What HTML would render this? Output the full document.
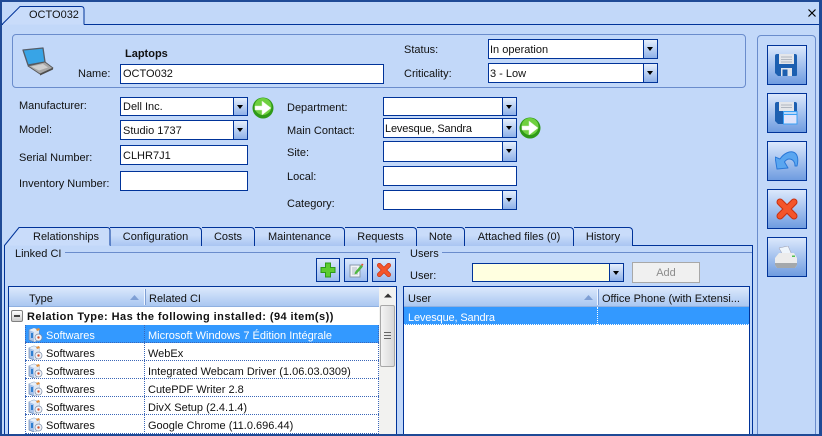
<!DOCTYPE html>
<html><head><meta charset="utf-8"><style>
html,body{margin:0;padding:0}
#r{position:relative;width:822px;height:436px;overflow:hidden;background:#c2d8f9;font:11px/14px "Liberation Sans",sans-serif;color:#111}
#r div,#r span,#r svg{position:absolute;box-sizing:border-box}
.t{white-space:nowrap}
.i{background:#fff;border:1px solid #003399}
.c{background:#fff;border:1px solid #003399}
.c>div{right:0;top:0;bottom:0;width:14px;border-left:1px solid #003399;background:linear-gradient(#e6effc,#8fb1e8)}
.c>div:after{content:"";position:absolute;left:3px;top:7px;border:3px solid transparent;border-top:4px solid #000;border-bottom:0}
.b{border:1px solid #003399;background:linear-gradient(#dbe8fc,#6f9ce0)}
.tab{top:227px;height:19px;border:1px solid #003399;border-bottom:0;border-left:0;border-radius:0 4px 0 0;background:linear-gradient(#c9dcfa,#c9dcfa 40%,#a9c5f2);text-align:center;line-height:19px}
.h{background:linear-gradient(#dce9fc,#aac7f1);height:20px;border-bottom:1px solid #8fb0e0}
.row{left:25px;width:354px;height:18px;background:#fff;border-bottom:1px dotted #3a66b8}
.row.s{background:#3399ff;color:#fff}
.row span{top:4px;white-space:nowrap}
.row svg{left:2px;top:1px}
</style></head><body><div id="r">
<svg width="0" height="0" style="left:0;top:0"><defs>
<symbol id="arrow" viewBox="0 0 22 22"><circle cx="11" cy="11" r="10.5" fill="#2f9a18"/><circle cx="11" cy="9.5" r="8.5" fill="#6fd040"/><path d="M3 9h7V4l9 7-9 7v-5H3z" fill="#fff" stroke="#d8f0c8" stroke-width=".5"/></symbol>
<symbol id="sw" viewBox="0 0 16 16"><path d="M2 4l5-2 5 2v10l-5 2-5-2z" fill="#a9c4ea" stroke="#6d87ad" stroke-width=".7"/><path d="M2 4l5 2 5-2-5-2z" fill="#e8f0fa"/><path d="M7 6v10l5-2V4z" fill="#dfe7f2"/><path d="M4 7h2v5H4z" fill="#2f7fd0"/><circle cx="11.500" cy="11.500" r="3.500" fill="#f2f4f8" stroke="#7a8ba8" stroke-width=".7"/><circle cx="11.500" cy="11.500" r="1.200" fill="#d05030"/><path d="M9 3l3-1 1 2-3 1z" fill="#e09040"/></symbol>
<symbol id="x" viewBox="0 0 24 24"><path d="M5 5L19 19M19 5L5 19" stroke="#c83010" stroke-width="7" stroke-linecap="round"/><path d="M5 5L19 19M19 5L5 19" stroke="#f4552a" stroke-width="5" stroke-linecap="round"/></symbol>
</defs></svg>

<!-- outer frame -->
<div style="left:0;top:0;width:822px;height:2px;background:#1f4a96"></div>
<div style="left:0;top:0;width:2px;height:436px;background:#1f4a96"></div>
<div style="right:0;top:0;width:3px;height:436px;background:#1f4a96"></div>
<div style="left:0;bottom:0;width:822px;height:2px;background:#1f4a96"></div>

<!-- document tab -->
<div style="left:2px;top:24px;width:817px;height:1px;background:#003399"></div>
<svg style="left:2px;top:5px" width="85" height="20" viewBox="0 0 85 20"><path d="M0 19.500L18 1.500H79q3 0 3 3v15" fill="#c9dcfa" stroke="#003399"/><path d="M1 20h81" stroke="#c2d8f9" stroke-width="1"/></svg>
<span class="t" style="left:29px;top:8px">OCTO032</span>
<svg style="left:807px;top:8px" width="10" height="10" viewBox="0 0 10 10"><path d="M1.500 1.500l7 7M8.500 1.500l-7 7" stroke="#000" stroke-width="1.200"/></svg>

<!-- header group -->
<div style="left:12px;top:34px;width:734px;height:54px;border:1px solid #6a8ccc;border-radius:4px"></div>
<svg style="left:22px;top:47px" width="32" height="29" viewBox="0 0 32 29"><path d="M1 3L21 1 23 15 6 18z" fill="#38a4e6" stroke="#555d68" stroke-width="1.300" stroke-linejoin="round"/><path d="M6 19L23 15 31 21 18 27z" fill="#a8a8a8" stroke="#555" stroke-width=".8" stroke-linejoin="round"/><path d="M9 19.500L21 17 26 20.500 17 23.500z" fill="#cfcfcf"/><path d="M18 27L31 21v1.500L18 28.500z" fill="#4c4c4c"/></svg>
<span class="t" style="left:125px;top:47px;font-weight:bold">Laptops</span>
<span class="t" style="left:78px;top:67px;">Name:</span>
<div class="i t" style="left:120px;top:64px;width:264px;height:20px;padding-left:2px;line-height:19px">OCTO032</div>
<span class="t" style="left:404px;top:43px">Status:</span>
<div class="c t" style="left:488px;top:39px;width:170px;height:20px;padding-left:1px;line-height:20px">In operation<div></div></div>
<span class="t" style="left:404px;top:67px">Criticality:</span>
<div class="c t" style="left:488px;top:63px;width:170px;height:20px;padding-left:1px;line-height:20px">3 - Low<div></div></div>

<!-- left fields -->
<span class="t" style="left:19px;top:99px">Manufacturer:</span>
<div class="c t" style="left:120px;top:97px;width:128px;height:19px;padding-left:2px;line-height:19px">Dell Inc.<div></div></div>
<svg style="left:252px;top:97px" width="22" height="22"><use href="#arrow"/></svg>
<span class="t" style="left:19px;top:123px">Model:</span>
<div class="c t" style="left:120px;top:120px;width:128px;height:20px;padding-left:2px;line-height:20px">Studio 1737<div></div></div>
<span class="t" style="left:19px;top:151px">Serial Number:</span>
<div class="i t" style="left:120px;top:145px;width:128px;height:20px;padding-left:2px;line-height:20px">CLHR7J1</div>
<span class="t" style="left:19px;top:177px">Inventory Number:</span>
<div class="i" style="left:120px;top:171px;width:128px;height:20px"></div>

<!-- middle fields -->
<span class="t" style="left:287px;top:101px">Department:</span>
<div class="c" style="left:383px;top:97px;width:134px;height:19px"><div></div></div>
<span class="t" style="left:287px;top:124px">Main Contact:</span>
<div class="c t" style="left:383px;top:118px;width:134px;height:20px;padding-left:1px;line-height:20px;letter-spacing:-.15px">Levesque, Sandra<div></div></div>
<svg style="left:519px;top:117px" width="22" height="22"><use href="#arrow"/></svg>
<span class="t" style="left:287px;top:146px">Site:</span>
<div class="c" style="left:383px;top:141px;width:134px;height:21px"><div></div></div>
<span class="t" style="left:287px;top:170px">Local:</span>
<div class="i" style="left:383px;top:166px;width:134px;height:20px"></div>
<span class="t" style="left:287px;top:197px">Category:</span>
<div class="c" style="left:383px;top:190px;width:134px;height:20px"><div></div></div>

<!-- side toolbar -->
<div style="left:757px;top:35px;width:59px;height:420px;border:1px solid #6a8ccc;border-radius:4px"></div>
<div class="b" style="left:767px;top:45px;width:40px;height:40px"></div>
<svg style="left:775px;top:53px" width="24" height="24" viewBox="0 0 24 24"><path d="M0 3q0-2 2-2h18q2 0 2 2v19q0 1-1 1H3l-3-3z" fill="#1c5fb0"/><path d="M4 1h15v10H4z" fill="#e4e6ea"/><path d="M6 4h11M6 6.500h11M6 9h11" stroke="#b0b6c0"/><path d="M6 15h11v8H6z" fill="#dfe4ec"/><path d="M7.500 16.500h5v6.500h-5z" fill="#1c5fb0"/></svg>
<div class="b" style="left:767px;top:93px;width:40px;height:40px"></div>
<svg style="left:775px;top:101px" width="24" height="24" viewBox="0 0 24 24"><path d="M0 3q0-2 2-2h18q2 0 2 2v19q0 1-1 1H3l-3-3z" fill="#1c5fb0"/><path d="M4 1h15v9H4z" fill="#e4e6ea"/><path d="M6 4h11M6 6.500h11" stroke="#b0b6c0"/><path d="M8.500 10.500h13.500v12.500H8.500z" fill="#dfe4fb" stroke="#3aa0f5"/><path d="M8.500 10.500h13.500v3H8.500z" fill="#b8d8fa" stroke="#3aa0f5"/></svg>
<div class="b" style="left:767px;top:141px;width:40px;height:40px"></div>
<svg style="left:775px;top:150px" width="24" height="22" viewBox="0 0 24 22"><path d="M0 7L5 9C9 3 15 1 18 2C22 3 24 8 22 16L20 16C20 12 18 9 14 9C12 9 10 11 9.500 12L13 18L2 19Z" fill="#5aa6f0" stroke="#2a78d8" stroke-linejoin="round"/></svg>
<div class="b" style="left:767px;top:189px;width:40px;height:40px"></div>
<svg style="left:775px;top:197px" width="24" height="24"><use href="#x"/></svg>
<div class="b" style="left:767px;top:237px;width:40px;height:40px"></div>
<svg style="left:775px;top:246px" width="24" height="23" viewBox="0 0 24 23"><path d="M4 2l9-2 4 9H8z" fill="#eef5fc" stroke="#99a" stroke-width=".5"/><path d="M0 12l4-5h15l3 5v7l-2 3H2l-2-3z" fill="#ececec"/><path d="M0 17h22v2l-2 3H2l-2-3z" fill="#a4a8ac"/><path d="M17 9.500h3v1.500h-3z" fill="#50c050"/></svg>

<!-- inner tabs -->
<div style="left:4px;top:245px;width:749px;height:190px;border:1px solid #003399;border-bottom:0"></div>
<div class="tab" style="left:110px;width:92px">Configuration</div>
<div class="tab" style="left:202px;width:53px">Costs</div>
<div class="tab" style="left:255px;width:90px">Maintenance</div>
<div class="tab" style="left:345px;width:72px">Requests</div>
<div class="tab" style="left:417px;width:48px">Note</div>
<div class="tab" style="left:465px;width:109px">Attached files (0)</div>
<div class="tab" style="left:574px;width:59px">History</div>
<svg style="left:4px;top:227px" width="108" height="20" viewBox="0 0 108 20"><path d="M.5 18.500L15 .5H103q3 0 3 3V19" fill="#c9dcfa" stroke="#003399"/><path d="M1 19h105" stroke="#c2d8f9" stroke-width="1"/></svg>
<span class="t" style="left:33px;top:230px">Relationships</span>

<!-- group legends -->
<span class="t" style="left:15px;top:247px">Linked CI</span>
<div style="left:65px;top:252px;width:335px;height:1px;background:#6a8ccc"></div>
<span class="t" style="left:410px;top:247px">Users</span>
<div style="left:442px;top:252px;width:310px;height:1px;background:#6a8ccc"></div>

<!-- small toolbar -->
<div class="b" style="left:316px;top:258px;width:24px;height:24px;background:linear-gradient(#dbe8fc,#9dbcee)"></div>
<svg style="left:320px;top:262px" width="16" height="16" viewBox="0 0 16 16"><path d="M5.500 1h5v4.500H15v5h-4.500V15h-5v-4.500H1v-5h4.500z" fill="#5ccc30" stroke="#2d9a18"/></svg>
<div class="b" style="left:344px;top:258px;width:24px;height:24px;background:linear-gradient(#dbe8fc,#9dbcee)"></div>
<svg style="left:348px;top:262px" width="16" height="16" viewBox="0 0 16 16"><path d="M2 3h10v12H2z" fill="#f2f4f6" stroke="#8a9aac"/><path d="M4 6h5M4 8h5M4 10h4M4 12h6" stroke="#b0b8c4"/><path d="M7 10l6-7 2 1.500-6 7-2.500 1z" fill="#50b840"/><path d="M13 3l1-1.500 1.500 1L14.500 4z" fill="#e05030"/></svg>
<div class="b" style="left:372px;top:258px;width:24px;height:24px;background:linear-gradient(#dbe8fc,#9dbcee)"></div>
<svg style="left:376px;top:262px" width="16" height="16"><use href="#x"/></svg>

<!-- user combo -->
<span class="t" style="left:410px;top:269px">User:</span>
<div class="c" style="left:472px;top:263px;width:152px;height:19px;background:#ffffe0"><div></div></div>
<div class="t" style="left:632px;top:262px;width:68px;height:21px;border:1px solid #a8a8a8;background:#f0f0f0;color:#8c8c8c;text-align:center;line-height:20px">Add</div>

<!-- left grid -->
<div style="left:8px;top:286px;width:389px;height:150px;background:#fff;border:1px solid #003399;border-bottom:0"></div>
<div class="h" style="left:9px;top:287px;width:370px"></div>
<span class="t" style="left:29px;top:292px">Type</span>
<svg style="left:130px;top:295px" width="9" height="5"><path d="M0 5L4.500 0 9 5z" fill="#7f9fd4"/></svg>
<div style="left:144px;top:289px;width:1px;height:16px;background:#f0f6ff"></div>
<div style="left:145px;top:289px;width:1px;height:16px;background:#7f9fd4"></div>
<span class="t" style="left:149px;top:292px">Related CI</span>

<div style="left:11px;top:310px;width:12px;height:12px;border:1px solid #808080;border-radius:2px;background:linear-gradient(#fff,#ccc)"></div>
<div style="left:14px;top:315px;width:6px;height:2px;background:#444"></div>
<span class="t" id="g" style="left:27px;top:310px;font-weight:bold;letter-spacing:.44px">Relation Type: Has the following installed: (94 item(s))</span>

<div class="row s" style="top:325px"><svg width="16" height="16"><use href="#sw"/></svg><span style="left:21px">Softwares</span><span style="left:123px">Microsoft Windows 7 Édition Intégrale</span></div>
<div class="row" style="top:343px"><svg width="16" height="16"><use href="#sw"/></svg><span style="left:21px">Softwares</span><span style="left:123px">WebEx</span></div>
<div class="row" style="top:361px"><svg width="16" height="16"><use href="#sw"/></svg><span style="left:21px">Softwares</span><span style="left:123px">Integrated Webcam Driver (1.06.03.0309)</span></div>
<div class="row" style="top:379px"><svg width="16" height="16"><use href="#sw"/></svg><span style="left:21px">Softwares</span><span style="left:123px">CutePDF Writer 2.8</span></div>
<div class="row" style="top:397px"><svg width="16" height="16"><use href="#sw"/></svg><span style="left:21px">Softwares</span><span style="left:123px">DivX Setup (2.4.1.4)</span></div>
<div class="row" style="top:415px;height:19px"><svg width="16" height="16"><use href="#sw"/></svg><span style="left:21px">Softwares</span><span style="left:123px">Google Chrome (11.0.696.44)</span></div>
<div style="left:25px;top:325px;width:0;height:109px;border-left:1px dotted #3a66b8"></div>
<div style="left:144px;top:325px;width:0;height:109px;border-left:1px dotted #3a66b8"></div>
<div style="left:378px;top:325px;width:0;height:109px;border-left:1px dotted #3a66b8"></div>

<!-- scrollbar -->
<div style="left:379px;top:287px;width:17px;height:147px;background:#f2f2f0"></div>
<svg style="left:384px;top:293px" width="8" height="5"><path d="M0 4.500L4 .5 8 4.500z" fill="#333"/></svg>
<div style="left:380px;top:305px;width:15px;height:62px;border:1px solid #a8a8a8;border-radius:2px;background:linear-gradient(90deg,#f4f4f4,#d8d8d8)"></div>
<div style="left:384px;top:332px;width:7px;height:1px;background:#666"></div>
<div style="left:384px;top:335px;width:7px;height:1px;background:#666"></div>
<div style="left:384px;top:338px;width:7px;height:1px;background:#666"></div>

<!-- right grid -->
<div style="left:403px;top:286px;width:347px;height:150px;background:#fff;border:1px solid #003399;border-bottom:0"></div>
<div class="h" style="left:404px;top:287px;width:345px"></div>
<span class="t" style="left:408px;top:292px">User</span>
<svg style="left:584px;top:295px" width="9" height="5"><path d="M0 5L4.500 0 9 5z" fill="#7f9fd4"/></svg>
<div style="left:597px;top:289px;width:1px;height:16px;background:#f0f6ff"></div>
<div style="left:598px;top:289px;width:1px;height:16px;background:#7f9fd4"></div>
<span class="t" style="left:602px;top:292px">Office Phone (with Extensi...</span>
<div class="t" style="left:404px;top:307px;width:345px;height:18px;background:#3399ff;color:#fff;border-bottom:1px dotted #fff;padding-left:4px;line-height:22px;letter-spacing:-.15px">Levesque, Sandra</div>
<div style="left:597px;top:307px;width:0;height:18px;border-left:1px dotted #fff"></div>

<div style="left:0;bottom:0;width:822px;height:2px;background:#1f4a96"></div>
</div></body></html>
